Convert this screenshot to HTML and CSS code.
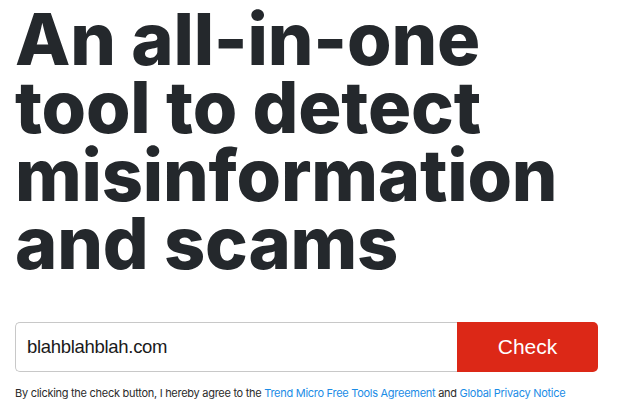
FILE: index.html
```html
<!DOCTYPE html>
<html lang="en">
<head>
<meta charset="utf-8">
<title>Trend Micro Check</title>
<link rel="stylesheet" href="styles.css">
</head>
<body>
<main class="hero">
  <h1 class="title">An all-in-one tool to detect misinformation and scams</h1>
  <form class="check-form">
    <input class="check-input" type="text" value="blahblahblah.com">
    <button class="check-button" type="button">Check</button>
  </form>
  <p class="notice">By clicking the check button, I hereby agree to the <a href="#">Trend Micro Free Tools Agreement</a> and <a href="#">Global Privacy Notice</a></p>
</main>
</body>
</html>
```

FILE: styles.css
```css
html, body {
  margin: 0;
  padding: 0;
  background: #ffffff;
}

.hero {
  padding: 5px 19px 0 15px;
  font-family: "Inter", "Liberation Sans", sans-serif;
}

.title {
  margin: 0;
  max-width: 570px;
  font-family: "Inter", sans-serif;
  font-weight: 800;
  font-size: 72px;
  line-height: 68px;
  letter-spacing: -0.2px;
  color: #24282c;
}

.check-form {
  display: flex;
  margin-top: 45px;
  height: 50px;
}

.check-input {
  flex: 1;
  box-sizing: border-box;
  height: 50px;
  margin: 0;
  padding: 0 11px;
  border: 1px solid #c8c8c8;
  border-right: none;
  border-radius: 5px 0 0 5px;
  font-family: "Liberation Sans", Arial, sans-serif;
  font-size: 18.5px;
  letter-spacing: -0.3px;
  color: #1a1a1a;
  outline: none;
}

.check-button {
  width: 141px;
  height: 50px;
  margin: 0;
  padding: 0 0 1px 0;
  border: none;
  border-radius: 0 5px 5px 0;
  background: #dc2817;
  color: #ffffff;
  font-family: "Liberation Sans", Arial, sans-serif;
  font-size: 21px;
  cursor: pointer;
}

.notice {
  margin: 14px 0 0 0;
  font-family: "Inter", sans-serif;
  font-size: 11px;
  line-height: 14px;
  letter-spacing: -0.28px;
  color: #2b2b2b;
}

.notice a {
  color: #1b8ce6;
  text-decoration: none;
}
```
